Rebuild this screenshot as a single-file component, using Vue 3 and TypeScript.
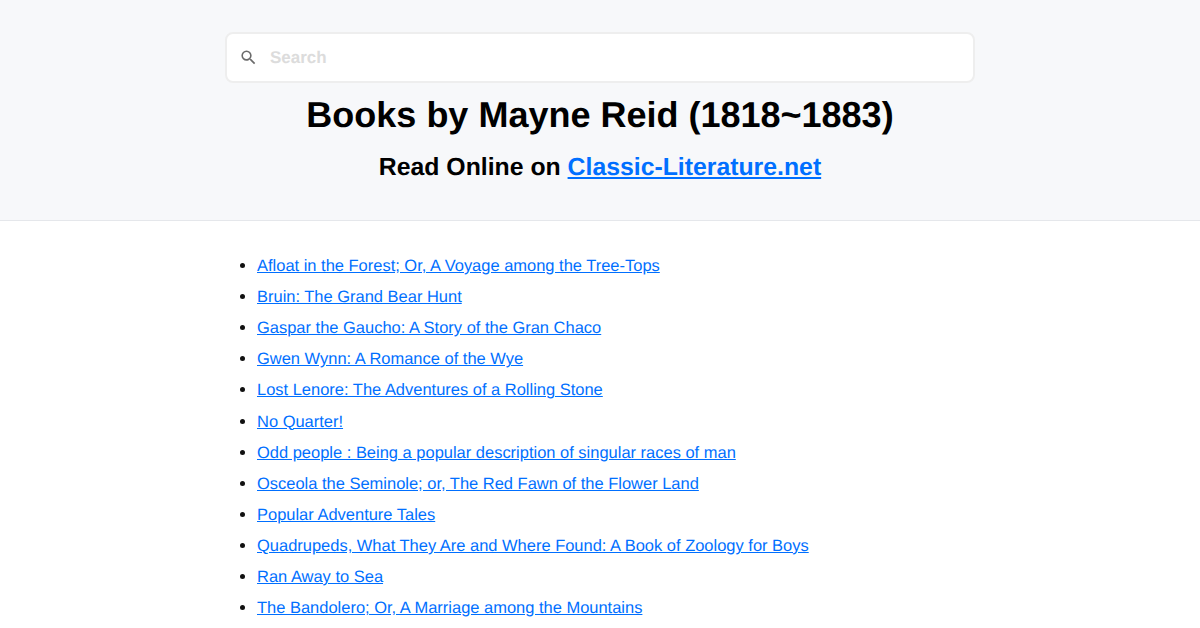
<script setup lang="ts">
const books: string[] = [
  'Afloat in the Forest; Or, A Voyage among the Tree-Tops',
  'Bruin: The Grand Bear Hunt',
  'Gaspar the Gaucho: A Story of the Gran Chaco',
  'Gwen Wynn: A Romance of the Wye',
  'Lost Lenore: The Adventures of a Rolling Stone',
  'No Quarter!',
  'Odd people : Being a popular description of singular races of man',
  'Osceola the Seminole; or, The Red Fawn of the Flower Land',
  'Popular Adventure Tales',
  'Quadrupeds, What They Are and Where Found: A Book of Zoology for Boys',
  'Ran Away to Sea',
  'The Bandolero; Or, A Marriage among the Mountains',
];
</script>

<template>
  <div class="page">
    <header class="hero">
      <div class="search">
        <svg class="search-icon" xmlns="http://www.w3.org/2000/svg" width="24" height="24" viewBox="0 0 24 24" fill="#6b6b6b">
          <path d="M15.5 14h-.79l-.28-.27A6.47 6.47 0 0 0 16 9.5 6.5 6.5 0 1 0 9.5 16c1.61 0 3.09-.59 4.23-1.57l.27.28v.79l5 4.99L20.49 19l-4.99-5zm-6 0C7.01 14 5 11.99 5 9.5S7.01 5 9.5 5 14 7.01 14 9.5 11.99 14 9.5 14z" />
        </svg>
        <input class="search-input" type="text" placeholder="Search" />
      </div>
      <h1>Books by Mayne Reid (1818~1883)</h1>
      <h2>Read Online on <a href="#">Classic-Literature.net</a></h2>
    </header>
    <main class="content">
      <ul>
        <li v-for="book in books" :key="book"><a href="#">{{ book }}</a></li>
      </ul>
    </main>
  </div>
</template>

<style>
html, body {
  margin: 0;
  background: #fff;
  overflow: hidden;
}
</style>

<style scoped>
.page {
  font-family: "Liberation Sans", Arial, sans-serif;
  color: #000;
  height: 628px;
  overflow: hidden;
  text-rendering: geometricPrecision;
}

.hero {
  display: flex;
  flex-direction: column;
  align-items: center;
  box-sizing: border-box;
  height: 221px;
  padding-top: 32px;
  background: #f7f8fa;
  border-bottom: 1px solid #e5e7eb;
}

.search {
  display: flex;
  align-items: center;
  box-sizing: border-box;
  width: 750px;
  height: 51px;
  padding-left: 12px;
  background: #fff;
  border: 2px solid #eeeeee;
  border-radius: 8px;
}

.search-icon {
  flex: none;
  width: 19px;
  height: 19px;
}

.search-input {
  flex: 1;
  min-width: 0;
  margin-left: 12px;
  padding: 0;
  border: 0;
  outline: 0;
  background: transparent;
  font: 700 17px "Liberation Sans", Arial, sans-serif;
  text-rendering: geometricPrecision;
}

.search-input::placeholder {
  color: #dcdcdc;
  opacity: 1;
}

h1 {
  margin: 10px 0 0;
  font-size: 36px;
  line-height: 44px;
  font-weight: 700;
}

h2 {
  margin: 15px 0 0;
  font-size: 24.8px;
  line-height: 32px;
  font-weight: 700;
}

a {
  color: #006fff;
}

.content {
  width: 750px;
  margin: 0 auto;
}

ul {
  margin: 33.1px 0 0;
  padding-left: 32px;
  list-style: none;
}

li {
  position: relative;
  font-size: 16.48px;
  line-height: 24px;
  margin-bottom: 7.1px;
}

/* marker drawn by hand, the native one sits 2px too far right */
li::before {
  content: "";
  position: absolute;
  left: -17px;
  top: 9px;
  width: 5px;
  height: 5px;
  border-radius: 50%;
  background: #111;
}
</style>
